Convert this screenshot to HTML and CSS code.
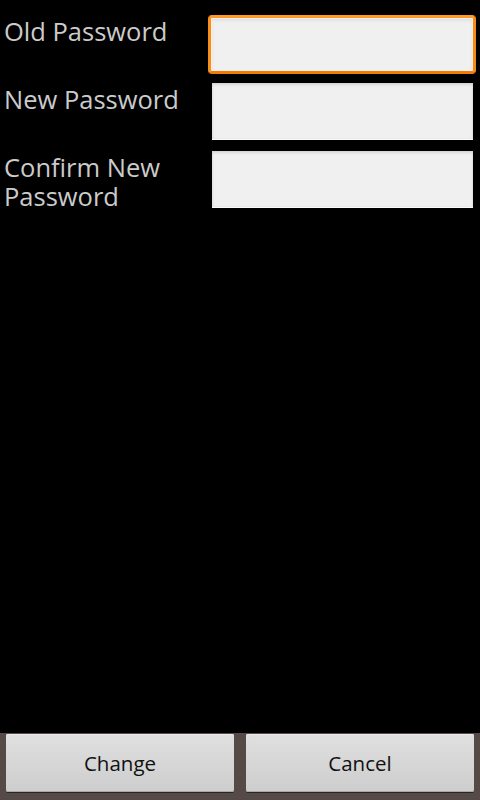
FILE: index.html
```html
<!DOCTYPE html>
<html>
<head>
<meta charset="utf-8">
<link rel="stylesheet" href="styles.css">
</head>
<body>
<div class="screen">
  <div class="form">
    <div class="row">
      <div class="label">Old Password</div>
      <div class="field focused"><div class="box"></div></div>
    </div>
    <div class="row">
      <div class="label">New Password</div>
      <div class="field"><div class="box"></div></div>
    </div>
    <div class="row">
      <div class="label">Confirm New Password</div>
      <div class="field"><div class="box"></div></div>
    </div>
  </div>
  <div class="bar">
    <button class="btn">Change</button>
    <button class="btn">Cancel</button>
  </div>
</div>
</body>
</html>
```
FILE: styles.css
```css
html, body {
  margin: 0;
  padding: 0;
  background: #000;
}
.screen {
  width: 480px;
  height: 800px;
  display: flex;
  flex-direction: column;
  font-family: "Open Sans", "DejaVu Sans", sans-serif;
}
.form {
  flex: 1;
  padding-top: 15px;
  display: flex;
  flex-direction: column;
  gap: 9px;
}
.row {
  display: flex;
  min-height: 59px;
}
.label {
  width: 204px;
  padding-left: 4px;
  padding-top: 2px;
  font-size: 25.5px;
  line-height: 29px;
  color: #cbcbcb;
}
.field {
  width: 268px;
  height: 59px;
  box-sizing: border-box;
  padding: 0 3px 2px 4px;
}
.box {
  height: 100%;
  background: #f0f0f0;
  box-shadow: inset 0 2px 3px rgba(0,0,0,0.10), inset 0 0 2px rgba(0,0,0,0.08);
  border-bottom: 1px solid #fbfbfb;
  box-sizing: border-box;
}
.field.focused {
  padding: 0;
  border: 3px solid #f7890f;
  border-color: #ff9a26 #f88a12 #f27c02 #fa8f18;
  border-radius: 4px;
  background: #f0f0f0;
}
.field.focused .box {
  border-bottom: none;
  box-shadow: inset 0 2px 3px rgba(0,0,0,0.06);
  margin: 1px;
  height: calc(100% - 2px);
}
.bar {
  height: 67px;
  box-sizing: border-box;
  background: #554a48;
  padding: 1px 6px 8px 6px;
  display: flex;
  gap: 12px;
}
.btn {
  flex: 1;
  height: 58px;
  border: none;
  border-radius: 2px;
  background: linear-gradient(#e0e0e0, #cdcdcd);
  box-shadow: 0 1px 0 #2a2424, inset 0 -1px 0 #a8a8a8, inset 0 1px 0 #ececec;
  font-family: "Open Sans", "DejaVu Sans", sans-serif;
  font-size: 20.5px;
  color: #111;
  padding: 0;
}
```
